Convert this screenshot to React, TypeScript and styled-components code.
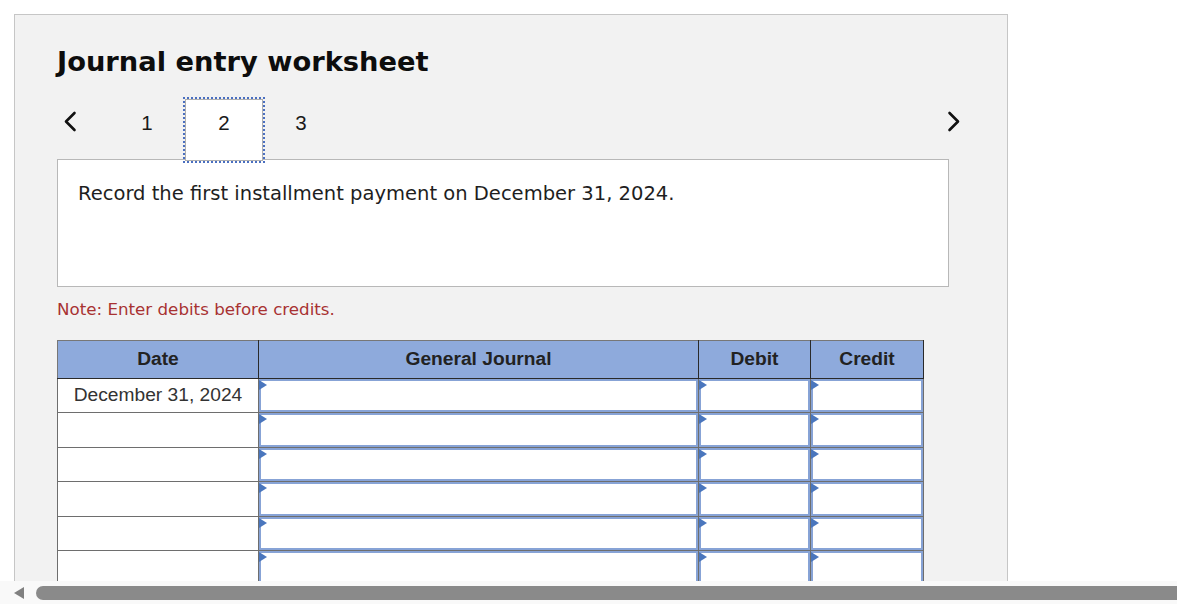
import React from "react";
import styled, { createGlobalStyle } from "styled-components";

const GlobalStyle = createGlobalStyle`
  html, body { margin: 0; padding: 0; background: #ffffff; overflow: hidden; }
  * { box-sizing: border-box; }
`;

const Viewport = styled.div`
  width: 1177px;
  height: 604px;
  display: flex;
  flex-direction: column;
  background: #ffffff;
`;

const Scroller = styled.div`
  height: 581px;
  overflow: hidden;
  padding: 14px 0 0 14px;
`;

const Panel = styled.section`
  width: 994px;
  min-height: 700px;
  background: #f2f2f2;
  border: 1px solid #c6c6c6;
  padding: 31px 58px 0 42px;
`;

const Title = styled.h2`
  margin: 0;
  font-family: "DejaVu Sans", Verdana, sans-serif;
  font-weight: bold;
  font-size: 27.3px;
  line-height: 32px;
  color: #0d0d0d;
`;

const NavRow = styled.div`
  display: flex;
  align-items: flex-start;
  margin: 21px -18px -2px 0;
  height: 62px;
  position: relative;
  z-index: 1;
`;

const ChevronButton = styled.button`
  width: 26px;
  height: 21px;
  margin-top: 12px;
  padding: 0;
  border: none;
  background: transparent;
  display: flex;
  justify-content: center;
  align-items: center;
  cursor: pointer;
`;

const TabList = styled.div`
  display: flex;
  margin-left: 26px;
`;

const Tab = styled.div<{ $active?: boolean }>`
  width: ${(p) => (p.$active ? "78px" : "76px")};
  height: 62px;
  padding-top: 11px;
  text-align: center;
  font-family: "Liberation Sans", Arial, sans-serif;
  font-size: 20.5px;
  line-height: 23px;
  color: #1a1a1a;
  background: ${(p) => (p.$active ? "#ffffff" : "transparent")};
  border: 1px solid ${(p) => (p.$active ? "#b0b0b0" : "transparent")};
  outline: ${(p) => (p.$active ? "2px dotted #4a6fc0" : "none")};
`;

const Spacer = styled.div`
  flex: 1;
`;

const PromptBox = styled.div`
  height: 128px;
  background: #ffffff;
  border: 1px solid #b8b8b8;
  padding: 22px 20px 0 20px;
  font-family: "DejaVu Sans", Verdana, sans-serif;
  font-size: 19.55px;
  line-height: 24px;
  color: #1e1e1e;
`;

const Note = styled.p`
  margin: 12px 0 0 0;
  font-family: "DejaVu Sans", Verdana, sans-serif;
  font-size: 16.7px;
  line-height: 20px;
  color: #a83232;
`;

const Table = styled.table`
  margin-top: 21px;
  border-collapse: collapse;
  table-layout: fixed;
  width: 866px;
  font-family: "Liberation Sans", Arial, sans-serif;
`;

const HeadCell = styled.th<{ $first?: boolean }>`
  height: 38px;
  padding: 0 0 2px 0;
  background: #8eaadc;
  font-size: 19.2px;
  font-weight: bold;
  color: #222222;
  text-align: center;
  border: 1px solid #2a2a2a;
  border-top-color: #777777;
  border-left-color: ${(p) => (p.$first ? "#777777" : "#2a2a2a")};
`;

const BodyCell = styled.td`
  padding: 0;
  border: 1px solid #6e6e6e;
  background: #ffffff;
  vertical-align: top;
`;

const DateText = styled.div`
  height: 33.4px;
  line-height: 32px;
  text-align: center;
  font-size: 19.2px;
  color: #333333;
`;

const InputBox = styled.div`
  position: relative;
  height: 33.4px;
  background: #ffffff;
  border: 2px solid #87a3d6;

  &::before {
    content: "";
    position: absolute;
    top: -1px;
    left: -2px;
    width: 0;
    height: 0;
    border-left: 8px solid #4a76bd;
    border-top: 5.5px solid transparent;
    border-bottom: 5.5px solid transparent;
  }
`;

const ScrollStrip = styled.div`
  height: 23px;
  background: #f9f9f9;
  display: flex;
  align-items: center;
  padding-left: 14px;
`;

const ScrollArrow = styled.div`
  width: 0;
  height: 0;
  border-right: 10px solid #808080;
  border-top: 6.5px solid transparent;
  border-bottom: 6.5px solid transparent;
`;

const ScrollThumb = styled.div`
  flex: 1;
  height: 14px;
  margin-left: 12px;
  background: #8a8a8a;
  border-radius: 7px 0 0 7px;
`;

const Chevron = ({ dir }: { dir: "left" | "right" }) => (
  <svg width="14" height="21" viewBox="0 0 14 21" aria-hidden="true">
    <path
      d={dir === "left" ? "M11.5 2 L3 10.5 L11.5 19" : "M2.5 2 L11 10.5 L2.5 19"}
      fill="none"
      stroke="#111"
      strokeWidth="2.6"
      strokeLinecap="round"
      strokeLinejoin="round"
    />
  </svg>
);

const rows = ["December 31, 2024", "", "", "", "", "", "", ""];

export default function App() {
  return (
    <>
      <GlobalStyle />
      <Viewport>
        <Scroller>
          <Panel>
            <Title>Journal entry worksheet</Title>
            <NavRow>
              <ChevronButton aria-label="previous">
                <Chevron dir="left" />
              </ChevronButton>
              <TabList>
                <Tab>1</Tab>
                <Tab $active>2</Tab>
                <Tab>3</Tab>
              </TabList>
              <Spacer />
              <ChevronButton aria-label="next">
                <Chevron dir="right" />
              </ChevronButton>
            </NavRow>
            <PromptBox>
              Record the first installment payment on December 31, 2024.
            </PromptBox>
            <Note>Note: Enter debits before credits.</Note>
            <Table>
              <colgroup>
                <col style={{ width: 201 }} />
                <col style={{ width: 440 }} />
                <col style={{ width: 112 }} />
                <col style={{ width: 113 }} />
              </colgroup>
              <thead>
                <tr>
                  <HeadCell $first>Date</HeadCell>
                  <HeadCell>General Journal</HeadCell>
                  <HeadCell>Debit</HeadCell>
                  <HeadCell>Credit</HeadCell>
                </tr>
              </thead>
              <tbody>
                {rows.map((d, i) => (
                  <tr key={i}>
                    <BodyCell>
                      <DateText>{d}</DateText>
                    </BodyCell>
                    <BodyCell>
                      <InputBox />
                    </BodyCell>
                    <BodyCell>
                      <InputBox />
                    </BodyCell>
                    <BodyCell>
                      <InputBox />
                    </BodyCell>
                  </tr>
                ))}
              </tbody>
            </Table>
          </Panel>
        </Scroller>
        <ScrollStrip>
          <ScrollArrow />
          <ScrollThumb />
        </ScrollStrip>
      </Viewport>
    </>
  );
}
